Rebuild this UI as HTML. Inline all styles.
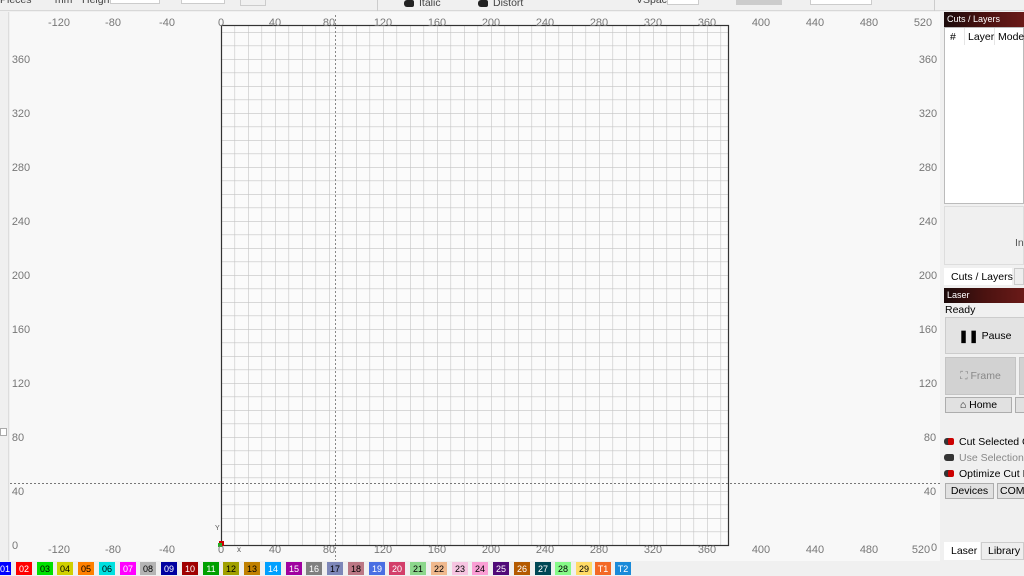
<!DOCTYPE html>
<html><head><meta charset="utf-8"><style>
*{margin:0;padding:0;box-sizing:border-box}
body{width:1024px;height:575px;overflow:hidden;background:#f0f0f0;font-family:"Liberation Sans",sans-serif;position:relative;font-size:11px}
.a{position:absolute}
.t{position:absolute;color:#555;font-size:10.5px;white-space:nowrap}
.btn{position:absolute;background:#e1e1e1;border:1px solid #adadad;font-size:10.5px;color:#000;display:flex;align-items:center;justify-content:center}
.hdr{position:absolute;height:15px;background:linear-gradient(90deg,#1a0a0a,#4a1210 50%,#6a1a18);color:#fff;font-size:9px;padding:2px 3px}
.sw{position:absolute;top:562px;height:13px;width:16px;font-size:9px;text-align:center;line-height:14px;color:#000}
.ck{position:absolute;width:10px;height:7px;border-radius:3px;background:#333}
.ck i{position:absolute;right:0;top:0;width:6px;height:7px;border-radius:2px;background:#c00}
</style></head><body>
<div class="a" style="left:0;top:0;width:1024px;height:11px;background:#f0f0f0;border-bottom:1px solid #d8d8d8"></div>
<div class="t" style="left:0;top:-6px;color:#444">Pieces&nbsp;&nbsp;&nbsp;&nbsp;&nbsp;&nbsp;&nbsp;&nbsp;mm</div>
<div class="t" style="left:82px;top:-6px;color:#444">Height</div>
<div class="a" style="left:110px;top:0;width:50px;height:4px;border:1px solid #ccc;border-top:none;background:#fff"></div>
<div class="a" style="left:181px;top:0;width:44px;height:4px;border:1px solid #ccc;border-top:none;background:#fff"></div>
<div class="a" style="left:240px;top:0;width:26px;height:6px;border:1px solid #ccc;border-top:none"></div>
<div class="a" style="left:377px;top:0;width:1px;height:11px;background:#ccc"></div>
<div class="ck" style="left:404px;top:0px;background:#222"><i style="background:#222"></i></div>
<div class="t" style="left:419px;top:-3px;color:#444">Italic</div>
<div class="ck" style="left:478px;top:0px;background:#222"><i style="background:#222"></i></div>
<div class="t" style="left:493px;top:-3px;color:#444">Distort</div>
<div class="t" style="left:636px;top:-6px;color:#444">VSpace</div>
<div class="a" style="left:667px;top:0;width:32px;height:5px;border:1px solid #ccc;border-top:none;background:#fff"></div>
<div class="a" style="left:736px;top:0;width:46px;height:5px;background:#ccc"></div>
<div class="a" style="left:810px;top:0;width:62px;height:5px;border:1px solid #ccc;border-top:none;background:#fff"></div>
<div class="a" style="left:934px;top:0;width:1px;height:11px;background:#ccc"></div>
<div class="a" style="left:0;top:12px;width:9px;height:550px;background:#f0f0f0;border-right:1px solid #ddd"></div>
<div class="a" style="left:0;top:428px;width:7px;height:8px;border:1px solid #aaa;background:#fff"></div>
<div class="a" style="left:10px;top:12px;width:930px;height:550px;background:#f8f8f8"></div>
<svg class="a" style="left:0;top:0" width="1024" height="575">
<defs><pattern id="g" x="221" y="545" width="13.5" height="13.5" patternUnits="userSpaceOnUse"><path d="M0 0H13.5M0 0V13.5" stroke="#c4c4c4" stroke-width="1.2" fill="none"/></pattern></defs>
<rect x="221" y="25" width="507" height="520" fill="#fbfbfb"/>
<rect x="221" y="25" width="507" height="520" fill="url(#g)"/>
<rect x="221.5" y="25.5" width="507" height="520" fill="none" stroke="#333" stroke-width="1.2"/>
<line x1="335.5" y1="15" x2="335.5" y2="560" stroke="#888" stroke-dasharray="2,2"/>
<line x1="10" y1="483.5" x2="940" y2="483.5" stroke="#777" stroke-dasharray="2,2"/>
<rect x="219" y="541" width="5" height="5" fill="#c00"/><rect x="218" y="543" width="4" height="4" fill="#2a2"/>
<g font-family="Liberation Sans" font-size="11" fill="#777" text-anchor="middle">
<text x="59" y="26">-120</text><text x="113" y="26">-80</text><text x="167" y="26">-40</text><text x="221" y="26">0</text><text x="275" y="26">40</text><text x="329" y="26">80</text><text x="383" y="26">120</text><text x="437" y="26">160</text><text x="491" y="26">200</text><text x="545" y="26">240</text><text x="599" y="26">280</text><text x="653" y="26">320</text><text x="707" y="26">360</text><text x="761" y="26">400</text><text x="815" y="26">440</text><text x="869" y="26">480</text><text x="923" y="26">520</text>
<text x="59" y="553">-120</text><text x="113" y="553">-80</text><text x="167" y="553">-40</text><text x="221" y="553">0</text><text x="275" y="553">40</text><text x="329" y="553">80</text><text x="383" y="553">120</text><text x="437" y="553">160</text><text x="491" y="553">200</text><text x="545" y="553">240</text><text x="599" y="553">280</text><text x="653" y="553">320</text><text x="707" y="553">360</text><text x="761" y="553">400</text><text x="815" y="553">440</text><text x="869" y="553">480</text><text x="921" y="553">520</text>
<text x="21" y="63">360</text><text x="21" y="117">320</text><text x="21" y="171">280</text><text x="21" y="225">240</text><text x="21" y="279">200</text><text x="21" y="333">160</text><text x="21" y="387">120</text><text x="18" y="441">80</text><text x="18" y="495">40</text><text x="15" y="549">0</text>
<text x="928" y="63">360</text><text x="928" y="117">320</text><text x="928" y="171">280</text><text x="928" y="225">240</text><text x="928" y="279">200</text><text x="928" y="333">160</text><text x="928" y="387">120</text><text x="930" y="441">80</text><text x="930" y="495">40</text><text x="934" y="551">0</text>
</g>
<text x="215" y="530" font-size="7" fill="#555" font-family="Liberation Sans">Y</text>
<text x="237" y="552" font-size="8" fill="#555" font-family="Liberation Sans">x</text>
</svg>
<div class="hdr" style="left:944px;top:12px;width:80px">Cuts / Layers</div>
<div class="a" style="left:944px;top:27px;width:80px;height:177px;background:#fff;border:1px solid #bbb"></div>
<div class="a" style="left:964px;top:28px;width:1px;height:17px;background:#e5e5e5"></div>
<div class="a" style="left:994px;top:28px;width:1px;height:17px;background:#e5e5e5"></div>
<div class="t" style="left:950px;top:31px;color:#000">#</div>
<div class="t" style="left:968px;top:31px;color:#000">Layer</div>
<div class="t" style="left:998px;top:31px;color:#000">Mode</div>
<div class="a" style="left:944px;top:206px;width:80px;height:59px;background:#f0f0f0;border:1px solid #ddd"></div>
<div class="t" style="left:1015px;top:237px">In</div>
<div class="a" style="left:944px;top:268px;width:68px;height:17px;background:#fff"></div>
<div class="t" style="left:951px;top:271px;color:#000">Cuts / Layers</div>
<div class="a" style="left:1014px;top:268px;width:10px;height:17px;background:#eee;border:1px solid #ccc"></div>
<div class="hdr" style="left:944px;top:288px;width:80px">Laser</div>
<div class="t" style="left:945px;top:304px;color:#000">Ready</div>
<div class="btn" style="left:945px;top:317px;width:80px;height:37px;background:#e3e3e3;border-color:#ccc"><b style="font-size:12px;margin-right:3px">❚❚</b>Pause</div>
<div class="btn" style="left:945px;top:357px;width:71px;height:38px;background:#d2d2d2;border-color:#c4c4c4;color:#888">⛶ Frame</div>
<div class="btn" style="left:1019px;top:357px;width:8px;height:38px;background:#d2d2d2;border-color:#c4c4c4"></div>
<div class="btn" style="left:945px;top:397px;width:67px;height:16px">⌂ Home</div>
<div class="btn" style="left:1015px;top:397px;width:12px;height:16px"></div>
<div class="ck" style="left:944px;top:438px"><i></i></div><div class="t" style="left:959px;top:436px;color:#000">Cut Selected Gra</div>
<div class="ck" style="left:944px;top:454px"><i style="background:#333"></i></div><div class="t" style="left:959px;top:452px;color:#888">Use Selection Or</div>
<div class="ck" style="left:944px;top:470px"><i></i></div><div class="t" style="left:959px;top:468px;color:#000">Optimize Cut Pa</div>
<div class="btn" style="left:945px;top:483px;width:49px;height:16px">Devices</div>
<div class="btn" style="left:997px;top:483px;width:30px;height:16px;justify-content:flex-start;padding-left:2px">COM3</div>
<div class="a" style="left:944px;top:542px;width:36px;height:18px;background:#fff"></div>
<div class="t" style="left:951px;top:545px;color:#000">Laser</div>
<div class="a" style="left:981px;top:542px;width:43px;height:18px;background:#eee;border:1px solid #ccc"></div>
<div class="t" style="left:988px;top:545px;color:#000">Library</div>
<div class="a" style="left:0;top:561px;width:1024px;height:14px;background:#f0f0f0"></div>
<div class="sw" style="left:-5px;background:#0000ff;color:#fff;text-align:right;padding-right:1px">01</div>
<div class="sw" style="left:16px;background:#ff0000;color:#fff">02</div>
<div class="sw" style="left:37px;background:#00e000">03</div>
<div class="sw" style="left:57px;background:#d0d000">04</div>
<div class="sw" style="left:78px;background:#ff8000">05</div>
<div class="sw" style="left:99px;background:#00e0e0">06</div>
<div class="sw" style="left:120px;background:#ff00ff;color:#fff">07</div>
<div class="sw" style="left:140px;background:#b4b4b4">08</div>
<div class="sw" style="left:161px;background:#0000a0;color:#fff">09</div>
<div class="sw" style="left:182px;background:#a00000;color:#fff">10</div>
<div class="sw" style="left:203px;background:#00a000;color:#fff">11</div>
<div class="sw" style="left:223px;background:#a0a000">12</div>
<div class="sw" style="left:244px;background:#c08000">13</div>
<div class="sw" style="left:265px;background:#00a0ff;color:#fff">14</div>
<div class="sw" style="left:286px;background:#a000a0;color:#fff">15</div>
<div class="sw" style="left:306px;background:#808080;color:#fff">16</div>
<div class="sw" style="left:327px;background:#7d87b9">17</div>
<div class="sw" style="left:348px;background:#bb7784">18</div>
<div class="sw" style="left:369px;background:#4a6fe3;color:#fff">19</div>
<div class="sw" style="left:389px;background:#d33f6a;color:#fff">20</div>
<div class="sw" style="left:410px;background:#8cd78c">21</div>
<div class="sw" style="left:431px;background:#f0b98d">22</div>
<div class="sw" style="left:452px;background:#f6c4e1">23</div>
<div class="sw" style="left:472px;background:#fa9ed4">24</div>
<div class="sw" style="left:493px;background:#500a78;color:#fff">25</div>
<div class="sw" style="left:514px;background:#b45a00;color:#fff">26</div>
<div class="sw" style="left:535px;background:#004754;color:#fff">27</div>
<div class="sw" style="left:555px;background:#86fa88">28</div>
<div class="sw" style="left:576px;background:#ffdb66">29</div>
<div class="sw" style="left:595px;background:#f36926;color:#fff">T1</div>
<div class="sw" style="left:615px;background:#1a8ad9;color:#fff">T2</div>
</body></html>
